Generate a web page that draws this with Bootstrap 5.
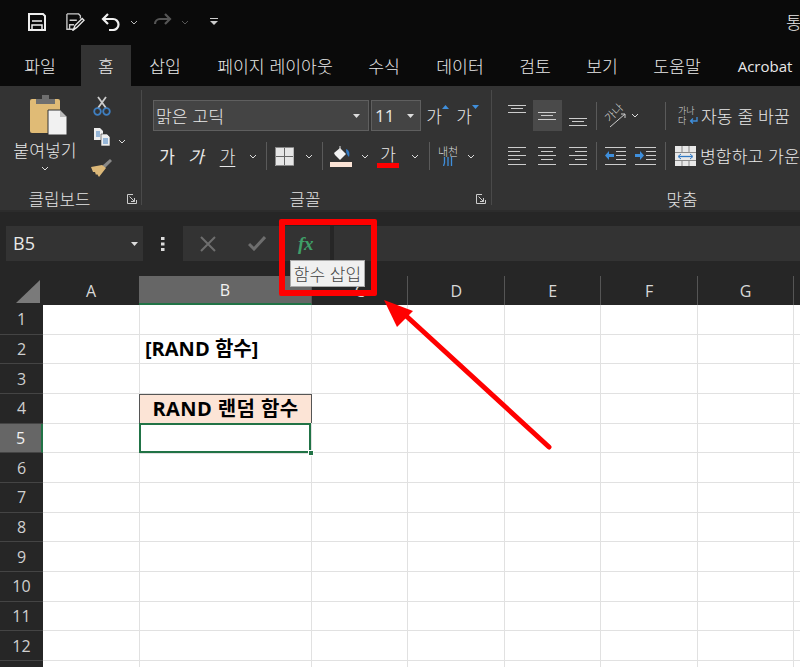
<!DOCTYPE html>
<html lang="ko"><head><meta charset="utf-8"><title>Excel</title>
<link href="https://cdn.jsdelivr.net/npm/bootstrap@5.3.0/dist/css/bootstrap.min.css" rel="stylesheet">
<style>
html,body{margin:0;height:667px;overflow:hidden;background:#262626}
body{font-family:"Noto Sans CJK KR","Noto Sans",sans-serif;color:#e8e8e8;position:relative;width:800px;font-weight:300}
svg{display:block}
.xl-title{height:44px;background:#0a0a0a;padding-left:28px;position:relative}
.xl-qa{width:18px;height:18px}
.xl-qa2{width:20px;margin-left:3px;margin-right:15px}
.xl-undo{width:20px;margin-left:1px}
.xl-ch1{margin-left:9px}
.xl-redo{width:20px;margin-left:14px}
.xl-cust{margin-left:21px}
.xl-title-text{position:absolute;left:786px;top:10px;font-size:17px;line-height:24px;white-space:nowrap}
.xl-tabs{display:grid;grid-template-columns:80px 51px 68px 152px 66px 86px 64px 70px 80px 96px;height:42px;background:#0a0a0a;font-size:17.200px;overflow:hidden;margin:0;padding:0;list-style:none;flex-wrap:nowrap}
.xl-tabs li{display:flex;align-items:center;justify-content:center;padding-top:2px;white-space:nowrap}
.xl-tabs li.xl-lat{font-family:"Open Sans",sans-serif;font-size:15px;font-weight:400}
.xl-tabs li.xl-on{background:#333;margin-top:1px;padding-top:1px;margin-left:1px}
.xl-ribbon{height:126px;background:#333;display:flex;overflow:hidden;font-size:16px;border-bottom:2px solid #2c2c2c}
.xl-grp{position:relative;flex:none;border-right:1px solid #4a4a4a;margin:4px 0 7px;height:115px}
.xl-g1{width:142px}.xl-g2{width:350px}.xl-g3{width:330px;border:0}
.xl-glabel{position:absolute;bottom:-4px;left:0;font-size:16.800px;line-height:20px;text-align:center;color:#e4e4e4;white-space:nowrap}
.xl-g1 .xl-glabel{width:119px}.xl-g2 .xl-glabel{width:326px}.xl-g3 .xl-glabel{width:380px}
.xl-launch{position:absolute;width:10px;height:10px;bottom:1px}
.xl-g1 .xl-launch{left:127px}.xl-g2 .xl-launch{left:334px}
.xl-clip{display:grid;grid-template-columns:90px 24px 14px;padding-top:4px}
.xl-paste{display:flex;flex-direction:column;align-items:center;height:85px}
.xl-paste>svg:first-child{margin-left:7px}
.xl-paste span{font-size:17.200px;line-height:20px;margin-top:4px;white-space:nowrap}
.xl-paste svg.xl-chv{margin-top:6px}
.xl-small{display:flex;flex-direction:column;gap:11px;align-items:center;justify-content:flex-start;padding-top:2px}
.xl-chvcell{display:flex;align-items:flex-start;justify-content:flex-start;padding:45px 0 0 4px}
.xl-frow{display:grid;align-items:center;justify-items:center;margin-left:11px}
.xl-fr1{grid-template-columns:216px 2px 50px 30px 30px;margin-top:10px;height:31px}
.xl-fr2{grid-template-columns:28px 30px 33px 17px 10px 26px 24px 2px 36px 12px 34px 20px 8px 30px 16px;margin-top:11px;height:28px}
.xl-input{width:216px;height:31px;background:#444;border:1px solid #5f5f5f;display:flex;align-items:center;justify-content:space-between;padding:0 8px 0 2px;font-size:17.200px}
.xl-input.xl-sz{width:50px;padding:0 6px 0 3px;font-size:17px;font-family:"Open Sans",sans-serif;font-weight:400}
.xl-sep{width:1px;height:28px;background:#5a5a5a}
.xl-big{font-size:17px;line-height:20px;position:relative}
.xl-big.xl-bd{font-weight:400}
.xl-big u{text-underline-offset:3px}
.xl-size{position:relative;font-size:17px;line-height:20px;padding-right:4px}
.xl-mark{position:absolute;right:-3px;top:-1px}
.xl-fcol{position:relative;font-size:17px;line-height:18px;padding-bottom:5px}
.xl-fcol i{position:absolute;left:-3px;right:-3px;bottom:0;height:5px;background:#f00}
.xl-dir{font-size:11px;line-height:11px;text-align:center;color:#ddd;white-space:nowrap}
.xl-dir svg{margin:0 auto}
.xl-arow{display:grid;align-items:center;justify-items:center;margin-left:9px}
.xl-ar1{grid-template-columns:31px 30px 31px 7px 28px 14px 19px 8px 170px;margin-top:10px;height:31px}
.xl-ar2{grid-template-columns:31px 30px 31px 7px 30px 31px 8px 170px;margin-top:11px;height:28px}
.xl-hl{width:29px;height:31px;background:#4a4a4a;display:flex;align-items:center;justify-content:center}
.xl-wrap{display:flex;align-items:center;justify-self:start;white-space:nowrap;font-size:17.200px;line-height:20px;margin-left:9px}
.xl-ar2 .xl-wrap{margin-left:6px}
.xl-wi{width:21px;margin-right:2px;font-size:9px;line-height:10px;color:#ddd;position:relative;white-space:nowrap}
.xl-wi svg{position:absolute;right:1px;bottom:1px}
.xl-ori{position:relative;width:24px;height:24px}
.xl-ori span{position:absolute;left:1px;top:1px;font-size:11px;line-height:14px;transform:rotate(-45deg);white-space:nowrap;color:#ddd}
.xl-ori svg{position:absolute;left:0;top:0}
.xl-fx{height:64px;background:#262626;display:flex;padding:14px 0 0 6px;position:relative}
.xl-name{width:137px;height:35px;background:#333;display:flex;align-items:center;justify-content:space-between;padding:0 5px 0 7px;font-size:18px;font-family:"Open Sans",sans-serif;font-weight:400}
.xl-dots{width:40px;display:flex;align-items:center;justify-content:center;height:35px}
.xl-fbtn{width:147px;height:35px;background:#333;display:grid;grid-template-columns:49px 49px 49px;align-items:center;justify-items:center}
.xl-fxt{font-family:"Liberation Serif",serif;font-style:italic;font-weight:700;font-size:19px;line-height:20px;color:#3f9f68;letter-spacing:-.5px}
.xl-fin{flex:1;height:35px;background:#333;margin-left:4px}
.xl-sheet{display:grid;grid-template-columns:43px 97px 172px 96.400px 96.600px 96.400px 96.600px 96.400px 96.600px;grid-template-rows:29px repeat(13,29.670px);background:#fff;position:relative;font-family:"Open Sans","Noto Sans CJK KR",sans-serif;font-weight:400}
.xl-ch{background:#262626;color:#d8d8d8;font-size:16px;display:flex;align-items:center;justify-content:center;border-right:1px solid #555;position:relative}
.xl-ch.xl-sel{background:#666;color:#f2f2f2;border-bottom:2px solid #217346;margin-left:-1px}
.xl-corner{background:#262626;display:flex;align-items:flex-end;justify-content:flex-end;padding:0 3px 2px 0}
.xl-rh{background:#262626;color:#cfcfcf;font-size:16px;display:flex;align-items:center;justify-content:center;border-bottom:1px solid #444}
.xl-rh.xl-sel{background:#666;color:#f2f2f2;border-right:2px solid #217346}
.xl-c{border-right:1px solid #e1e1e1;border-bottom:1px solid #e1e1e1;color:#000;font-weight:700;font-size:20px;white-space:nowrap;display:flex;align-items:center}
.xl-ttl{padding-left:5px}
.xl-hd{background:#fce4d6;justify-content:center;border:1px solid #555;border-bottom-color:#888;margin-left:-1px;letter-spacing:.4px}
.xl-act{box-shadow:inset 0 0 0 2px #217346;position:relative;margin:-1px 0 -1px -1px}
.xl-hnd{position:absolute;right:-3px;bottom:-3px;background:#217346;border:1px solid #fff;box-sizing:content-box;width:4px;height:4px}
.xl-redbox{position:absolute;left:279px;top:219px;width:98px;height:77px;border:6px solid #f00;border-radius:2px;pointer-events:none}
.xl-tip{position:absolute;left:290px;top:260px;width:75px;height:27px;background:#f0f0f0;border:1px solid #aaa;color:#444;font-size:17px;line-height:25px;text-align:center;white-space:nowrap}
.xl-arrow{position:absolute;left:375px;top:295px;width:190px;height:165px;pointer-events:none}
</style></head>
<body>
<div class="xl-title d-flex align-items-center">
  <svg class="xl-qa me-3" viewBox="0 0 18 18" fill="none" stroke="#eee" stroke-width="2"><path d="M1 1h14l2 2v14H1z"/><path d="M4 8h10" stroke-width="1.500"/><path d="M4 17v-5h10v5" stroke-width="1.500"/><path d="M10 13v3" stroke="#0a0a0a"/></svg>
  <svg class="xl-qa xl-qa2" viewBox="0 0 20 20" fill="none" stroke="#ccc" stroke-width="1.500"><path d="M1 1h13l2 2v3M8 18H1V1M4 8h8M4 18v-5h5"/><path d="M8 19l2-5 8-8 2 2-8 8z" fill="#0a0a0a" stroke="#e8e8e8"/></svg>
  <svg class="xl-qa xl-undo" viewBox="0 0 20 18" fill="none" stroke="#f0f0f0" stroke-width="2.200"><path d="M7 1L2 6l5 5M2 6h10a5 5 0 0 1 0 11H8"/></svg>
  <svg class="xl-ch1" width="8" height="5" viewBox="0 0 8 5" fill="none" stroke="#bbb"><path d="M1 1l3 3 3-3"/></svg>
  <svg class="xl-qa xl-redo" viewBox="0 0 20 18" fill="none" stroke="#555" stroke-width="2.200"><path d="M13 1l5 5-5 5M18 6H8a5 5 0 0 0-5 5"/></svg>
  <svg class="xl-ch1" width="8" height="5" viewBox="0 0 8 5" fill="none" stroke="#555"><path d="M1 1l3 3 3-3"/></svg>
  <svg class="xl-cust" width="8" height="8" viewBox="0 0 8 8" fill="#ccc"><rect y="0" width="8" height="1"/><path d="M0 3h8L4 7z"/></svg>
  <span class="xl-title-text">통</span>
</div>
<ul class="nav xl-tabs">
  <li>파일</li><li class="xl-on">홈</li><li>삽입</li><li>페이지 레이아웃</li><li>수식</li><li>데이터</li><li>검토</li><li>보기</li><li>도움말</li><li class="xl-lat">Acrobat</li>
</ul>
<div class="xl-ribbon">
  <section class="xl-grp xl-g1">
    <div class="xl-clip">
      <div class="xl-paste">
        <svg width="38" height="42" viewBox="0 0 38 42"><rect x="0" y="5" width="30" height="34" rx="2" fill="#e0bb76"/><path d="M6 10V5h6V1h7v4h6v5z" fill="#6f6f6f"/><path d="M18 16h12l7 7v18H18z" fill="#f1f1f1" stroke="#333" stroke-width="1"/><path d="M30 16v7h7z" fill="#bbb"/></svg>
        <span>붙여넣기</span>
        <svg class="xl-chv" width="8" height="5" viewBox="0 0 8 5" fill="none" stroke="#ddd"><path d="M1 1l3 3 3-3"/></svg>
      </div>
      <div class="xl-small">
        <svg width="18" height="20" viewBox="0 0 18 20" fill="none"><path d="M5 1l8 11M13 1L5 12" stroke="#ccc" stroke-width="1.800"/><circle cx="4.500" cy="15.500" r="3.300" stroke="#3f7fc1" stroke-width="1.800"/><circle cx="13.500" cy="15.500" r="3.300" stroke="#3f7fc1" stroke-width="1.800"/></svg>
        <svg width="18" height="20" viewBox="0 0 18 20"><path d="M1 1h6l3 3v9H1z" fill="#eee"/><path d="M8 7h6l3 3v9H8z" fill="#eee" stroke="#333" stroke-width=".600"/><path d="M3 5h4M3 7h4M3 9h4M10 12h5M10 14h5M10 16h5" stroke="#3f7fc1"/></svg>
        <svg width="22" height="20" viewBox="0 0 22 20"><path d="M11 8l8-7 2 2-7 7z" fill="#888"/><path d="M0 9l11-2 4 3-7 9-2-3-1 1-1-3-2 0z" fill="#dcb878"/></svg>
      </div>
      <div class="xl-chvcell"><svg width="8" height="5" viewBox="0 0 8 5" fill="none" stroke="#ddd"><path d="M1 1l3 3 3-3"/></svg></div>
    </div>
    <div class="xl-glabel">클립보드</div>
    <svg class="xl-launch" viewBox="0 0 10 10" fill="none" stroke="#ccc"><path d="M9.500 6v3.500H.5V.5H6M2.500 2.500l5 5M7.500 4v3.500H4"/></svg>
  </section>
  <section class="xl-grp xl-g2">
    <div class="xl-frow xl-fr1">
      <div class="xl-input"><span>맑은 고딕</span><svg width="7" height="4" viewBox="0 0 7 4" fill="#ddd"><path d="M0 0h7L3.500 4z"/></svg></div><span></span>
      <div class="xl-input xl-sz"><span>11</span><svg width="7" height="4" viewBox="0 0 7 4" fill="#ddd"><path d="M0 0h7L3.500 4z"/></svg></div>
      <div class="xl-size">가<svg class="xl-mark" width="7" height="4" viewBox="0 0 7 4" fill="#3f8fdc"><path d="M0 4h7L3.500 0z"/></svg></div>
      <div class="xl-size">가<svg class="xl-mark" width="7" height="4" viewBox="0 0 7 4" fill="#3f8fdc"><path d="M0 0h7L3.500 4z"/></svg></div>
    </div>
    <div class="xl-frow xl-fr2">
      <div class="xl-big xl-bd">가</div>
      <div class="xl-big xl-bd fst-italic">가</div>
      <div class="xl-big"><u>가</u></div>
      <svg width="8" height="5" viewBox="0 0 8 5" fill="none" stroke="#ddd"><path d="M1 1l3 3 3-3"/></svg>
      <div class="xl-sep"></div>
      <svg width="19" height="19" viewBox="0 0 19 19"><rect width="19" height="19" fill="#e6e6e6"/><path d="M9.500 1v17M1 9.500h17" stroke="#666"/><path d="M0 .5h19v18H.5V0" fill="none" stroke="#888"/></svg>
      <svg width="8" height="5" viewBox="0 0 8 5" fill="none" stroke="#ddd"><path d="M1 1l3 3 3-3"/></svg>
      <div class="xl-sep"></div>
      <svg width="22" height="23" viewBox="0 0 22 23"><path d="M4 8l6-5 6 6-6 6-5-5z" fill="#f2f2f2"/><path d="M10 1v5" stroke="#ddd"/><path d="M16 4c3 1 4 4 3 8-2-2-3-4-3-8z" fill="#2f78c4"/><rect y="17" width="22" height="5" fill="#fce4d6"/></svg>
      <svg width="8" height="5" viewBox="0 0 8 5" fill="none" stroke="#ddd"><path d="M1 1l3 3 3-3"/></svg>
      <div class="xl-fcol">가<i></i></div>
      <svg width="8" height="5" viewBox="0 0 8 5" fill="none" stroke="#ddd"><path d="M1 1l3 3 3-3"/></svg>
      <div class="xl-sep"></div>
      <div class="xl-dir">내천<svg width="10" height="9" viewBox="0 0 10 9" fill="none" stroke="#3f8fdc" stroke-width="1.300"><path d="M1.500 0v6L.5 9M5 0v9M8.500 0v9"/></svg></div>
      <svg width="8" height="5" viewBox="0 0 8 5" fill="none" stroke="#ddd"><path d="M1 1l3 3 3-3"/></svg>
    </div>
    <div class="xl-glabel">글꼴</div>
    <svg class="xl-launch" viewBox="0 0 10 10" fill="none" stroke="#ccc"><path d="M9.500 6v3.500H.5V.5H6M2.500 2.500l5 5M7.500 4v3.500H4"/></svg>
  </section>
  <section class="xl-grp xl-g3">
    <div class="xl-arow xl-ar1">
      <svg class="align-self-start mt-1" width="18" height="10" viewBox="0 0 18 10" stroke="#ccc"><path d="M0 1.500h18M3 4.500h12M0 8.500h18"/></svg>
      <div class="xl-hl"><svg width="18" height="10" viewBox="0 0 18 10" stroke="#ccc"><path d="M0 1.500h18M3 4.500h12M0 8.500h18"/></svg></div>
      <svg class="align-self-end mb-1" width="18" height="10" viewBox="0 0 18 10" stroke="#ccc"><path d="M0 1.500h18M3 4.500h12M0 8.500h18"/></svg>
      <div class="xl-sep"></div>
      <div class="xl-ori"><span>가나</span><svg width="24" height="24" viewBox="0 0 24 24" fill="none" stroke="#ccc"><path d="M8 23L23 10M19 10h4v4"/></svg></div>
      <svg width="8" height="5" viewBox="0 0 8 5" fill="none" stroke="#ddd"><path d="M1 1l3 3 3-3"/></svg>
      <span></span>
      <div class="xl-sep"></div>
      <div class="xl-wrap"><div class="xl-wi">가나<br>다<svg width="9" height="8" viewBox="0 0 9 8" fill="none" stroke="#3f8fdc" stroke-width="1.300"><path d="M8 0v4H2M4 1.500L1.500 4 4 6.500"/></svg></div>자동 줄 바꿈</div>
    </div>
    <div class="xl-arow xl-ar2">
      <svg width="18" height="20" viewBox="0 0 18 20" stroke="#ccc"><path d="M0 1.500h18M0 5.500h12M0 9.500h18M0 13.500h12M0 18.500h18"/></svg>
      <svg width="18" height="20" viewBox="0 0 18 20" stroke="#ccc"><path d="M0 1.500h18M3 5.500h12M0 9.500h18M3 13.500h12M0 18.500h18"/></svg>
      <svg width="18" height="20" viewBox="0 0 18 20" stroke="#ccc"><path d="M0 1.500h18M6 5.500h12M0 9.500h18M6 13.500h12M0 18.500h18"/></svg>
      <div class="xl-sep"></div>
      <svg width="21" height="20" viewBox="0 0 21 20" fill="none"><path d="M0 1.500h21M11 5.500h10M11 9.500h10M11 13.500h10M0 18.500h21" stroke="#ccc"/><path d="M0 9.500l4-4.500v3h5v3H4v3z" fill="#3f8fdc"/></svg>
      <svg width="21" height="20" viewBox="0 0 21 20" fill="none"><path d="M0 1.500h21M11 5.500h10M11 9.500h10M11 13.500h10M0 18.500h21" stroke="#ccc"/><path d="M9 9.500L5 5v3H0v3h5v3z" fill="#3f8fdc"/></svg>
      <div class="xl-sep"></div>
      <div class="xl-wrap"><svg class="me-1" width="21" height="20" viewBox="0 0 21 20"><rect width="21" height="20" fill="#e8e8e8"/><path d="M0 6.500h21M0 14.500h21M7 0v6M14 0v6M7 15v5M14 15v5" stroke="#888"/><path d="M4 10.500h13" stroke="#2f78c4" stroke-width="1.300"/><path d="M6 8l-3 2.500L6 13M15 8l3 2.500-3 2.500" fill="none" stroke="#2f78c4"/></svg>병합하고 가운데 맞춤</div>
    </div>
    <div class="xl-glabel">맞춤</div>
  </section>
</div>
<div class="xl-fx">
  <div class="xl-name"><span>B5</span><svg width="7" height="4" viewBox="0 0 7 4" fill="#ddd"><path d="M0 0h7L3.500 4z"/></svg></div>
  <div class="xl-dots"><svg width="4" height="14" viewBox="0 0 4 14" fill="#ddd"><rect x="0" y="0" width="3.500" height="3"/><rect x="0" y="5.500" width="3.500" height="3"/><rect x="0" y="11" width="3.500" height="3"/></svg></div>
  <div class="xl-fbtn">
    <svg width="16" height="16" viewBox="0 0 16 16" stroke="#6e6e6e" stroke-width="2"><path d="M1 1l14 14M15 1L1 15"/></svg>
    <svg width="18" height="15" viewBox="0 0 18 15" fill="none" stroke="#6e6e6e" stroke-width="3"><path d="M1 8l5 5L17 1"/></svg>
    <span class="xl-fxt">fx</span>
  </div>
  <div class="xl-fin"></div>
</div>
<div class="xl-sheet">
  <div class="xl-corner"><svg width="24" height="23" viewBox="0 0 24 23" fill="#7a7a7a"><path d="M24 0v23H0z"/></svg></div>
  <div class="xl-ch">A</div><div class="xl-ch xl-sel">B</div><div class="xl-ch">C</div><div class="xl-ch">D</div><div class="xl-ch">E</div><div class="xl-ch">F</div><div class="xl-ch">G</div><div class="xl-ch">H</div>
  <div class="xl-rh">1</div><div class="xl-c"></div><div class="xl-c"></div><div class="xl-c"></div><div class="xl-c"></div><div class="xl-c"></div><div class="xl-c"></div><div class="xl-c"></div><div class="xl-c"></div>
  <div class="xl-rh">2</div><div class="xl-c"></div><div class="xl-c xl-ttl">[RAND 함수]</div><div class="xl-c"></div><div class="xl-c"></div><div class="xl-c"></div><div class="xl-c"></div><div class="xl-c"></div><div class="xl-c"></div>
  <div class="xl-rh">3</div><div class="xl-c"></div><div class="xl-c"></div><div class="xl-c"></div><div class="xl-c"></div><div class="xl-c"></div><div class="xl-c"></div><div class="xl-c"></div><div class="xl-c"></div>
  <div class="xl-rh">4</div><div class="xl-c"></div><div class="xl-c xl-hd">RAND 랜덤 함수</div><div class="xl-c"></div><div class="xl-c"></div><div class="xl-c"></div><div class="xl-c"></div><div class="xl-c"></div><div class="xl-c"></div>
  <div class="xl-rh xl-sel">5</div><div class="xl-c"></div><div class="xl-c xl-act"><span class="xl-hnd"></span></div><div class="xl-c"></div><div class="xl-c"></div><div class="xl-c"></div><div class="xl-c"></div><div class="xl-c"></div><div class="xl-c"></div>
  <div class="xl-rh">6</div><div class="xl-c"></div><div class="xl-c"></div><div class="xl-c"></div><div class="xl-c"></div><div class="xl-c"></div><div class="xl-c"></div><div class="xl-c"></div><div class="xl-c"></div>
  <div class="xl-rh">7</div><div class="xl-c"></div><div class="xl-c"></div><div class="xl-c"></div><div class="xl-c"></div><div class="xl-c"></div><div class="xl-c"></div><div class="xl-c"></div><div class="xl-c"></div>
  <div class="xl-rh">8</div><div class="xl-c"></div><div class="xl-c"></div><div class="xl-c"></div><div class="xl-c"></div><div class="xl-c"></div><div class="xl-c"></div><div class="xl-c"></div><div class="xl-c"></div>
  <div class="xl-rh">9</div><div class="xl-c"></div><div class="xl-c"></div><div class="xl-c"></div><div class="xl-c"></div><div class="xl-c"></div><div class="xl-c"></div><div class="xl-c"></div><div class="xl-c"></div>
  <div class="xl-rh">10</div><div class="xl-c"></div><div class="xl-c"></div><div class="xl-c"></div><div class="xl-c"></div><div class="xl-c"></div><div class="xl-c"></div><div class="xl-c"></div><div class="xl-c"></div>
  <div class="xl-rh">11</div><div class="xl-c"></div><div class="xl-c"></div><div class="xl-c"></div><div class="xl-c"></div><div class="xl-c"></div><div class="xl-c"></div><div class="xl-c"></div><div class="xl-c"></div>
  <div class="xl-rh">12</div><div class="xl-c"></div><div class="xl-c"></div><div class="xl-c"></div><div class="xl-c"></div><div class="xl-c"></div><div class="xl-c"></div><div class="xl-c"></div><div class="xl-c"></div>
  <div class="xl-rh"></div><div class="xl-c"></div><div class="xl-c"></div><div class="xl-c"></div><div class="xl-c"></div><div class="xl-c"></div><div class="xl-c"></div><div class="xl-c"></div><div class="xl-c"></div>
</div>
<div class="xl-redbox"></div>
<div class="xl-tip">함수 삽입</div>
<svg class="xl-arrow" viewBox="0 0 190 165"><path d="M174 152L28 18" stroke="#f00" stroke-width="5" stroke-linecap="round"/><path d="M9 5l29 11-16 16z" fill="#f00"/></svg>
<script src="https://cdn.jsdelivr.net/npm/bootstrap@5.3.0/dist/js/bootstrap.bundle.min.js"></script>
</body></html>
